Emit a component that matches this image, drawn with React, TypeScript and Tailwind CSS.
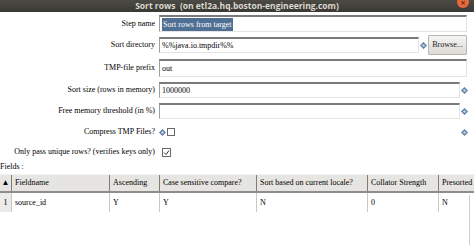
import React from "react";

const Diamond = () => (
  <svg width="7" height="7" viewBox="0 0 7 7" className="shrink-0">
    <path d="M3.5 0 L7 3.5 L3.5 7 L0 3.5 Z" fill="#5b7fa8" />
    <circle cx="3.5" cy="3.5" r="1.3" fill="#c9d7e8" />
  </svg>
);

const inputCls =
  "h-full bg-white border-t-2 border-t-[#7a7a7a] border-l border-l-[#a0a0a0] border-r border-r-[#e4e4e4] border-b border-b-[#e4e4e4] flex items-center pl-[2px] text-[8px] text-black";

const Label = ({ children }: { children: React.ReactNode }) => (
  <div className="w-[159px] shrink-0 text-right pr-[4px] text-[8px] text-black whitespace-nowrap">{children}</div>
);

export default function App() {
  const cols = [
    { w: 12, h: "▲", d: "1" },
    { w: 98, h: "Fieldname", d: "source_id" },
    { w: 50, h: "Ascending", d: "Y" },
    { w: 97, h: "Case sensitive compare?", d: "Y" },
    { w: 111, h: "Sort based on current locale?", d: "N" },
    { w: 71, h: "Collator Strength", d: "0" },
    { w: 60, h: "Presorted", d: "N" },
  ];
  return (
    <div
      className="w-[474px] h-[245px] bg-white overflow-hidden relative flex flex-col"
      style={{ fontFamily: '"Liberation Serif", "Times New Roman", serif' }}
    >
      {/* title bar */}
      <div className="h-[12px] shrink-0 bg-gradient-to-b from-[#4b4a45] to-[#3a3935] relative flex items-center justify-center">
        <span
          className="text-[8.5px] font-bold text-[#dcd8cf] leading-none"
          style={{ fontFamily: '"Open Sans", "DejaVu Sans", sans-serif' }}
        >
          Sort rows&nbsp; (on etl2a.hq.boston-engineering.com)
        </span>
        <div className="absolute left-[457px] top-[-4px] w-[12px] h-[12px] rounded-full bg-[#e9683c] flex items-center justify-center">
          <span className="text-[7px] leading-none text-[#6b2a12] mt-[3px] font-bold" style={{ fontFamily: '"DejaVu Sans", sans-serif' }}>×</span>
        </div>
      </div>

      {/* Step name */}
      <div className="mt-[3px] h-[17px] flex items-center">
        <Label>Step name</Label>
        <div className={inputCls + " w-[308px]"}>
          <span className="bg-[#4f6f94] text-white px-[1px] leading-[13px]">Sort rows from target</span>
        </div>
      </div>

      {/* Sort directory */}
      <div className="mt-[3px] h-[20px] flex items-center">
        <Label>Sort directory</Label>
        <div className={inputCls + " w-[260px] !h-[16px]"}>%%java.io.tmpdir%%</div>
        <div className="w-[9px] flex justify-center"><Diamond /></div>
        <div className="w-[39px] h-[20px] bg-gradient-to-b from-[#f4f4f2] to-[#dcdad5] border border-[#b8b6b0] rounded-[1px] flex items-center justify-center text-[8px] text-[#222]">
          Browse...
        </div>
      </div>

      {/* TMP-file prefix */}
      <div className="mt-[4px] h-[18px] flex items-center">
        <Label>TMP-file prefix</Label>
        <div className={inputCls + " w-[308px]"}>out</div>
      </div>

      {/* Sort size */}
      <div className="mt-[5px] h-[16px] flex items-center">
        <Label>Sort size (rows in memory)</Label>
        <div className={inputCls + " w-[301px]"}>1000000</div>
        <div className="w-[9px] flex justify-center"><Diamond /></div>
      </div>

      {/* Free memory */}
      <div className="mt-[5px] h-[16px] flex items-center">
        <Label>Free memory threshold (in %)</Label>
        <div className={inputCls + " w-[301px]"}></div>
        <div className="w-[9px] flex justify-center"><Diamond /></div>
      </div>

      {/* Compress */}
      <div className="mt-[6px] h-[14px] flex items-center">
        <Label>Compress TMP Files?</Label>
        <div className="flex items-center gap-[1px] w-[301px]">
          <Diamond />
          <div className="w-[8px] h-[8px] border border-[#6a6a6a] bg-white" />
        </div>
        <div className="w-[9px] flex justify-center"><Diamond /></div>
      </div>

      {/* Only pass unique */}
      <div className="mt-[6px] h-[14px] flex items-center">
        <Label>Only pass unique rows? (verifies keys only)</Label>
        <div className="w-[9px] h-[9px] ml-[3px] border border-[#6a6a6a] bg-white flex items-center justify-center">
          <svg width="7" height="7" viewBox="0 0 7 7">
            <path d="M1 3.5 L3 5.5 L6 1.5" stroke="#333" strokeWidth="1" fill="none" />
          </svg>
        </div>
      </div>

      {/* Fields */}
      <div className="mt-[2px] h-[12px] flex items-center text-[8px] text-black">Fields :</div>

      {/* table */}
      <div className="mt-[1px] flex-1 relative">
        <div className="flex h-[19px] bg-[#e6e5e1] border-t border-t-[#f2f2f0] border-b-2 border-b-[#8d8d8a]">
          {cols.map((c, i) => (
            <div
              key={i}
              className={
                "shrink-0 h-full flex items-center text-[8px] text-black whitespace-nowrap overflow-hidden " +
                (i === 0 ? "justify-center text-[5px] text-[#333] " : "pl-[3px] ") +
                (i < cols.length - 1 ? "border-r border-r-[#7d7d7a]" : "")
              }
              style={{ width: c.w }}
            >
              {c.h}
            </div>
          ))}
        </div>
        <div className="flex h-[19px]">
          {cols.map((c, i) => (
            <div
              key={i}
              className={
                "shrink-0 h-full flex items-center text-[8px] text-black whitespace-nowrap overflow-hidden " +
                (i === 0 ? "justify-center bg-[#ecebe8] " : "pl-[3px] ") +
                (i < cols.length - 1 ? "border-r border-r-[#c8c8c6]" : "")
              }
              style={{ width: c.w }}
            >
              {c.d}
            </div>
          ))}
        </div>
        <div className="absolute left-[469px] top-[21px] bottom-0 w-px bg-[#d0d0ce]" />
      </div>
    </div>
  );
}
